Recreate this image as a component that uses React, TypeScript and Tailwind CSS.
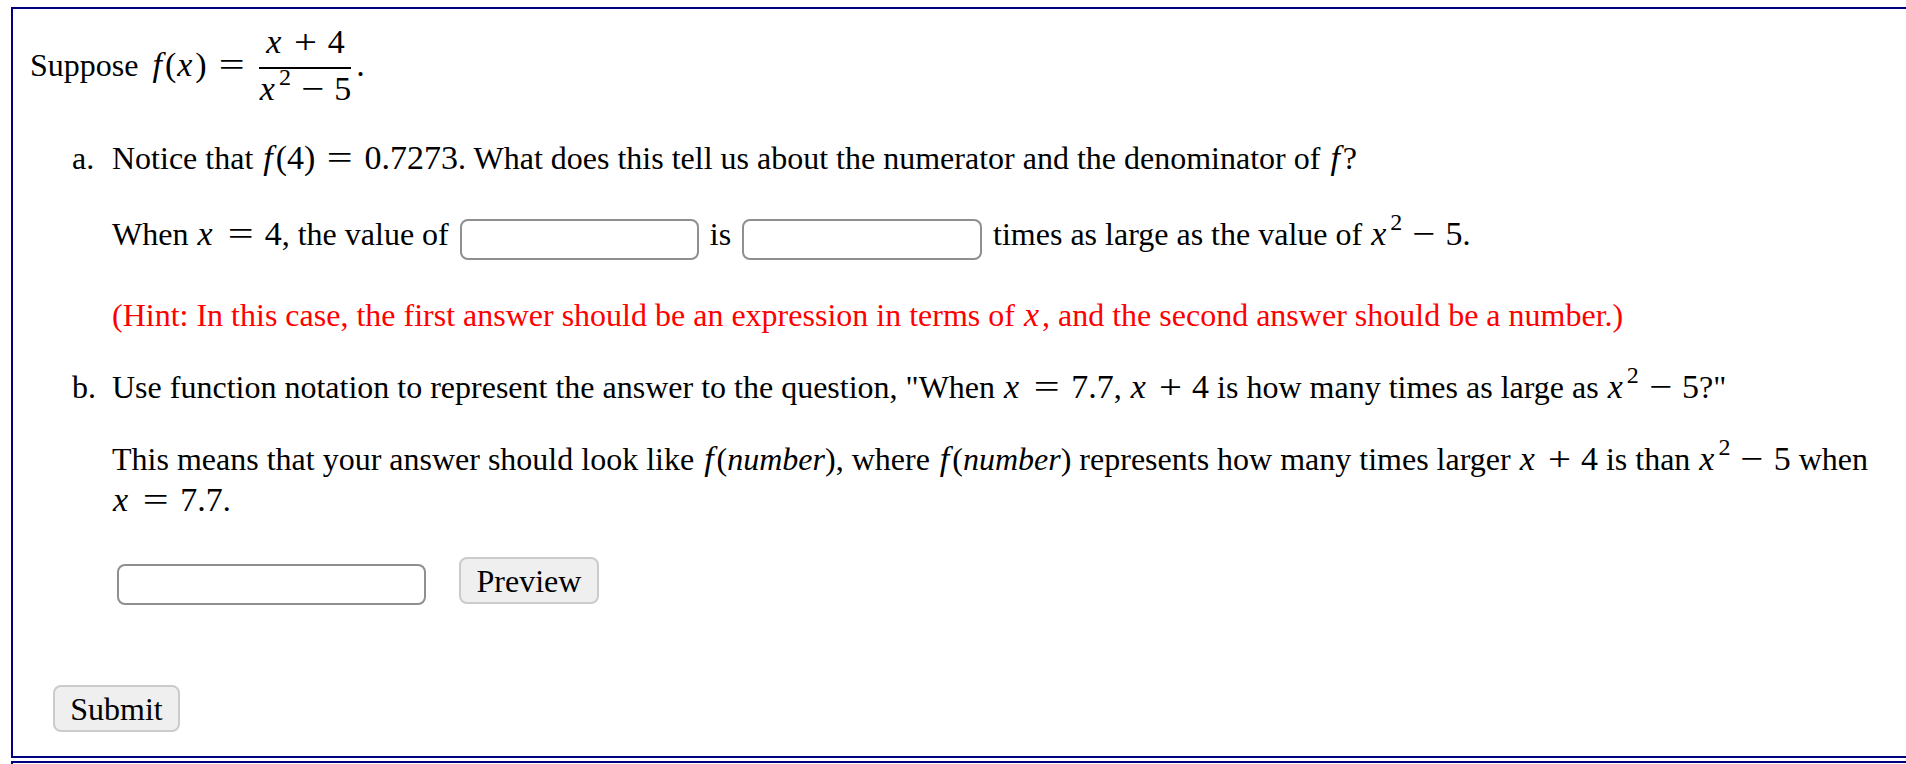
import React from "react";

function M({ children }: { children: React.ReactNode }) {
  return <span className="whitespace-nowrap text-[34px] leading-[0]">{children}</span>;
}
function X() {
  return <span className="ml-[1px] mr-[3px] italic">x</span>;
}
function F() {
  return <span className="ml-[2px] mr-[3px] italic">f</span>;
}
function Eq() {
  return <span className="mx-[15px] inline-block scale-x-[1.35]">=</span>;
}
function Plus() {
  return <span className="mx-[12px] inline-block scale-x-[1.2]">+</span>;
}
function Minus() {
  return <span className="mx-[12px] inline-block scale-x-[1.2]">−</span>;
}
function Sq() {
  return <span className="relative -top-[15px] ml-[1px] text-[24px] leading-[0]">2</span>;
}

function Blank({ w }: { w: number }) {
  return (
    <span className="mx-[3px] inline-block align-[-5px]">
      <input
        type="text"
        aria-label="answer"
        className="block h-[41px] rounded-[8px] border-2 border-[#8f8f8f] bg-white outline-none"
        style={{ width: w }}
      />
    </span>
  );
}

export default function App() {
  return (
    <div className="h-[764px] w-full overflow-hidden bg-white font-['Liberation_Serif',serif] text-[32px] leading-[38px] text-black">
      <div className="ml-[11px] mt-[7px] w-[1940px] border-l-2 border-t-2 border-b-2 border-[#000080] pl-[17px] pt-[17px] pb-[24px]">
        <p>
          Suppose{" "}
          <M>
            <span className="ml-[4px]">
              <F />(<X />)
            </span>
            <Eq />
            <span className="inline-flex flex-col items-stretch px-[3px] align-middle">
              <span className="block pb-[9px] text-center leading-[32px]">
                <X />
                <Plus />4
              </span>
              <span className="block h-[2px] bg-black" />
              <span className="block pt-[4px] pb-[5px] text-center leading-[32px]">
                <X />
                <Sq />
                <Minus />5
              </span>
            </span>
            <span className="ml-[2px]">.</span>
          </M>
        </p>

        <div className="ml-[42px] mt-[29px]">
          <div className="flex">
            <span className="w-[40px] shrink-0">a.</span>
            <div className="min-w-0 flex-1">
              <p>
                Notice that{" "}
                <M>
                  <F />
                  (4)
                  <Eq />
                  0.7273
                </M>
                . What does this tell us about the numerator and the denominator of{" "}
                <M>
                  <F />
                </M>
                ?
              </p>
              <p className="mt-[38px]">
                When{" "}
                <M>
                  <X />
                  <Eq />4
                </M>
                , the value of <Blank w={239} /> is <Blank w={240} /> times as large as the value of{" "}
                <M>
                  <X />
                  <Sq />
                  <Minus />5
                </M>
                .
              </p>
              <p className="mt-[36px] text-[#ff0000]">
                (Hint: In this case, the first answer should be an expression in terms of{" "}
                <M>
                  <X />
                </M>
                , and the second answer should be a number.)
              </p>
            </div>
          </div>

          <div className="mt-[34px] flex">
            <span className="w-[40px] shrink-0">b.</span>
            <div className="min-w-0 flex-1">
              <p>
                Use function notation to represent the answer to the question, "When{" "}
                <M>
                  <X />
                  <Eq />
                  7.7
                </M>
                ,{" "}
                <M>
                  <X />
                  <Plus />4
                </M>{" "}
                is how many times as large as{" "}
                <M>
                  <X />
                  <Sq />
                  <Minus />5
                </M>
                ?"
              </p>
              <p className="mt-[33px] leading-[41px]">
                This means that your answer should look like{" "}
                <M>
                  <F />
                </M>
                (<span className="italic">number</span>), where{" "}
                <M>
                  <F />
                </M>
                (<span className="italic">number</span>) represents how many times larger{" "}
                <M>
                  <X />
                  <Plus />4
                </M>{" "}
                is than{" "}
                <M>
                  <X />
                  <Sq />
                  <Minus />5
                </M>{" "}
                when{" "}
                <M>
                  <X />
                  <Eq />
                  7.7
                </M>
                .
              </p>
              <div className="mt-[36px] flex items-end">
                <input
                  type="text"
                  aria-label="answer"
                  className="ml-[5px] block h-[41px] w-[309px] rounded-[8px] border-2 border-[#8f8f8f] bg-white outline-none"
                />
                <button
                  type="button"
                  className="mb-[1px] ml-[33px] flex h-[47px] w-[140px] items-center justify-center rounded-[8px] border-2 border-[#cbcbcb] bg-[#efefef] text-[32px]"
                >
                  Preview
                </button>
              </div>
            </div>
          </div>
        </div>

        <button
          type="button"
          className="ml-[23px] mt-[80px] flex h-[47px] w-[127px] items-center justify-center rounded-[8px] border-2 border-[#cbcbcb] bg-[#efefef] text-[32px]"
        >
          Submit
        </button>
      </div>
      <div className="ml-[11px] mt-[3px] h-[20px] w-[1940px] border-l-2 border-t-2 border-[#000080]" />
    </div>
  );
}
